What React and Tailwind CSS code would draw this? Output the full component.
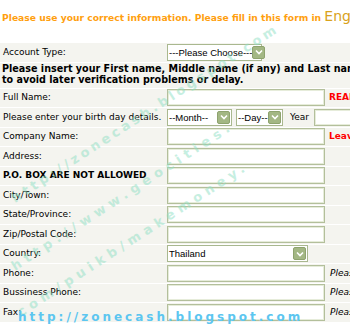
import React from 'react';

const verdana = { fontFamily: '"DejaVu Sans", Verdana, sans-serif' };
const arial = { fontFamily: '"Liberation Sans", Arial, sans-serif' };

const Arrow = () => (
  <span className="w-[13px] h-[13px] rounded-[2px] bg-[#a3b784] border border-[#8ea36e] flex items-center justify-center shrink-0">
    <svg width="8" height="6" viewBox="0 0 8 6">
      <path d="M1 1.5 L4 4.5 L7 1.5" fill="none" stroke="#ffffff" strokeWidth="1.6" />
    </svg>
  </span>
);

const Select = ({ text, w }) => (
  <div className={`h-[17px] ${w} border border-[#a9b88f] bg-white flex items-center justify-between pl-[1px] pr-[1px]`}>
    <span className="text-[9.5px] text-black leading-none whitespace-nowrap" style={arial}>{text}</span>
    <Arrow />
  </div>
);

const Input = ({ w = 'w-[158px]' }) => (
  <div className={`h-[17px] ${w} border border-[#b3bf9b] bg-white shadow-[inset_0_0_0_1px_#e6ecda]`} />
);

const Row = ({ label, bold, children, note }) => (
  <div className="flex items-center h-[19.5px] border-t border-white bg-[#f4f4ef] whitespace-nowrap">
    <div className={`w-[167px] pl-[3px] text-[9px] text-black ${bold ? 'font-bold' : ''}`}>{label}</div>
    <div className="flex items-center">{children}</div>
    {note}
  </div>
);

const Red = ({ children }) => (
  <span className="ml-[4px] text-[9px] font-bold text-[#ff0000]">{children}</span>
);

const Italic = ({ children }) => (
  <span className="ml-[5px] text-[9px] italic text-black">{children}</span>
);

export default function App() {
  return (
    <div className="relative w-[350px] h-[326px] overflow-hidden bg-white" style={verdana}>
      <div className="w-[460px]">
        <div className="h-[42px] pl-[2px] pt-[4px] whitespace-nowrap">
          <span className="text-[9.2px] font-bold text-[#ff9f10]">
            Please use your correct information. Please fill in this form in{' '}
          </span>
          <span className="text-[14px] text-[#d9a21c]">English</span>
        </div>

        <Row label="Account Type:">
          <Select text="---Please Choose---" w="w-[95px]" />
        </Row>

        <div className="border-t border-white bg-[#f4f4ef] pl-[2px] pt-0 pb-[3px] text-[9.6px] font-bold leading-[11px] text-black whitespace-nowrap">
          <div>Please insert your First name, Middle name (if any) and Last name</div>
          <div>to avoid later verification problems or delay.</div>
        </div>

        <Row label="Full Name:" note={<Red>REAL NAME</Red>}>
          <Input />
        </Row>
        <Row label="Please enter your birth day details.">
          <div className="flex items-center">
            <Select text="--Month--" w="w-[65px]" />
            <div className="w-[4px]" />
            <Select text="--Day--" w="w-[47px]" />
            <span className="ml-[7px] mr-[5px] text-[9px] text-black">Year</span>
            <Input w="w-[60px]" />
          </div>
        </Row>
        <Row label="Company Name:" note={<Red>Leave blank if none</Red>}>
          <Input />
        </Row>
        <Row label="Address:">
          <Input />
        </Row>
        <Row label="P.O. BOX ARE NOT ALLOWED" bold>
          <Input />
        </Row>
        <Row label="City/Town:">
          <Input />
        </Row>
        <Row label="State/Province:">
          <Input />
        </Row>
        <Row label="Zip/Postal Code:">
          <Input />
        </Row>
        <Row label="Country:">
          <Select text="Thailand" w="w-[141px]" />
        </Row>
        <Row label="Phone:" note={<Italic>Please include area code</Italic>}>
          <Input />
        </Row>
        <Row label="Bussiness Phone:" note={<Italic>Please include area code</Italic>}>
          <Input />
        </Row>
        <Row label="Fax:" note={<Italic>Please include area code</Italic>}>
          <Input />
        </Row>
      </div>

      {/* diagonal watermarks */}
      <div className="pointer-events-none absolute inset-0 text-[13px] font-bold text-[#8fe0c4] opacity-50 whitespace-nowrap">
        <span className="absolute left-[18px] top-[188px] origin-bottom-left -rotate-[33deg] tracking-[3.5px]">
          http://zonecash.blogspot.com
        </span>
        <span className="absolute left-[18px] top-[256px] origin-bottom-left -rotate-[33deg] tracking-[5px]">
          http://www.geocities.
        </span>
        <span className="absolute left-[24px] top-[302px] origin-bottom-left -rotate-[33deg] tracking-[5px]">
          com/puikb/makemoney.
        </span>
      </div>

      <div className="pointer-events-none absolute left-[18px] top-[308px] text-[12px] font-bold tracking-[3px] text-[#5cc6f0] whitespace-nowrap">
        http://zonecash.blogspot.com
      </div>
    </div>
  );
}
